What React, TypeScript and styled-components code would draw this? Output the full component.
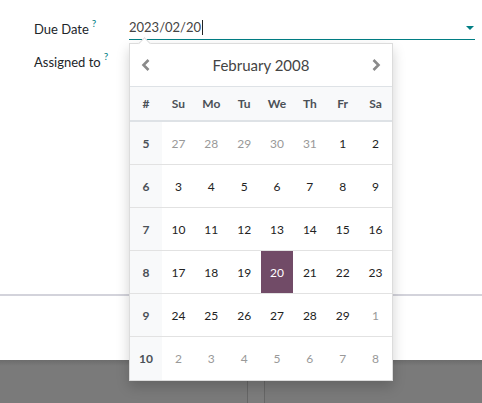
import { createGlobalStyle } from 'styled-components'
import styled from 'styled-components'

const GlobalStyle = createGlobalStyle`
  html, body {
    margin: 0;
    padding: 0;
    background: #fff;
    font-family: Lato, 'Open Sans', sans-serif;
    color: #212529;
  }
`

const Page = styled.div`
  position: relative;
  width: 482px;
  height: 403px;
  display: flex;
  flex-direction: column;
  overflow: hidden;
`

const FormArea = styled.div`
  height: 294px;
  padding: 13px 7px 0 34px;
  box-sizing: border-box;
  display: flex;
  flex-direction: column;
`

const FieldRow = styled.div`
  display: flex;
  align-items: flex-end;
  height: 33px;
`

const Label = styled.div`
  width: 95px;
  font-size: 13px;
  color: #212529;
  padding-bottom: 5px;
  align-self: flex-start;
  padding-top: 8px;
`

const Help = styled.sup`
  color: #017e84;
  font-size: 10px;
  margin-left: 3px;
  vertical-align: 7px;
  line-height: 0;
`

const DateInput = styled.div`
  flex: 1;
  height: 27px;
  margin-bottom: 6px;
  border-bottom: 1px solid #017e84;
  display: flex;
  align-items: center;
  justify-content: space-between;
  font-size: 13px;
  color: #444;
  padding-top: 2px;
  box-sizing: border-box;
`

const Cursor = styled.span`
  display: inline-block;
  width: 1px;
  height: 15px;
  background: #222;
  margin-left: 1px;
  vertical-align: -3px;
`

const Caret = styled.span`
  width: 0;
  height: 0;
  border-left: 4px solid transparent;
  border-right: 4px solid transparent;
  border-top: 4px solid #017e84;
  margin-right: 1px;
  margin-top: 2px;
`

const Footer = styled.div`
  height: 64px;
  border-top: 2px solid #d3d3db;
  background: #fff;
`

const Backdrop = styled.div`
  flex: 1;
  background: linear-gradient(#6c6c6c, #7a7a7a 6px);
  display: flex;
`

const GhostColumn = styled.div`
  margin-left: 247px;
  width: 16px;
  border-left: 1px solid #666;
  border-right: 1px solid #666;
  background: #7c7c7c;
`

const Picker = styled.div`
  position: absolute;
  left: 129px;
  top: 43px;
  width: 264px;
  background: #fff;
  border: 1px solid #dcdcdc;
  box-sizing: border-box;
  box-shadow: 0 6px 12px rgba(0, 0, 0, 0.18);
  font-size: 12px;

  &::before {
    content: '';
    position: absolute;
    left: 10px;
    top: -5px;
    width: 8px;
    height: 8px;
    background: #fff;
    border-top: 1px solid #dcdcdc;
    border-left: 1px solid #dcdcdc;
    transform: rotate(45deg);
  }
`

const MonthBar = styled.div`
  height: 42px;
  display: flex;
  align-items: center;
  justify-content: space-between;
  padding: 0 11px 0 11px;
  border-bottom: 1px solid #dee2e6;
  color: #444;
  font-size: 15px;
`

const Nav = styled.svg`
  width: 10px;
  height: 14px;
  fill: none;
  stroke: #8a8a8a;
  stroke-width: 2.6;
`

const Grid = styled.div`
  display: grid;
  grid-template-columns: 32px repeat(7, 1fr);
`

const HeadCell = styled.div`
  height: 33px;
  display: flex;
  align-items: center;
  justify-content: center;
  background: #f8f9fa;
  border-bottom: 2px solid #dee2e6;
  font-weight: 700;
  color: #4b5157;
`

const WeekCell = styled.div<{ $last?: boolean }>`
  height: 43px;
  display: flex;
  align-items: center;
  justify-content: center;
  background: #f8f9fa;
  font-weight: 700;
  color: #4b5157;
  border-bottom: ${(p) => (p.$last ? 'none' : '1px solid #e2e2e2')};
  box-sizing: border-box;
`

const DayCell = styled.div<{ $muted?: boolean; $active?: boolean; $last?: boolean }>`
  height: 43px;
  display: flex;
  align-items: center;
  justify-content: center;
  box-sizing: border-box;
  border-bottom: ${(p) => (p.$last ? 'none' : '1px solid #e2e2e2')};
  color: ${(p) => (p.$active ? '#fff' : p.$muted ? '#999' : '#222')};
  background: ${(p) => (p.$active ? '#714b67' : '#fff')};
`

const weekdays = ['Su', 'Mo', 'Tu', 'We', 'Th', 'Fr', 'Sa']

const weeks: { no: number; days: { d: number; muted?: boolean }[] }[] = [
  { no: 5, days: [27, 28, 29, 30, 31].map((d) => ({ d, muted: true })).concat([{ d: 1 }, { d: 2 }]) },
  { no: 6, days: [3, 4, 5, 6, 7, 8, 9].map((d) => ({ d })) },
  { no: 7, days: [10, 11, 12, 13, 14, 15, 16].map((d) => ({ d })) },
  { no: 8, days: [17, 18, 19, 20, 21, 22, 23].map((d) => ({ d })) },
  { no: 9, days: [24, 25, 26, 27, 28, 29].map((d) => ({ d })).concat([{ d: 1, muted: true }]) },
  { no: 10, days: [2, 3, 4, 5, 6, 7, 8].map((d) => ({ d, muted: true })) },
]

export default function App() {
  return (
    <>
      <GlobalStyle />
      <Page>
        <FormArea>
          <FieldRow>
            <Label>
              Due Date<Help>?</Help>
            </Label>
            <DateInput>
              <span>
                2023/02/20
                <Cursor />
              </span>
              <Caret />
            </DateInput>
          </FieldRow>
          <FieldRow>
            <Label>
              Assigned to<Help>?</Help>
            </Label>
          </FieldRow>
        </FormArea>
        <Footer />
        <Backdrop>
          <GhostColumn />
        </Backdrop>

        <Picker>
          <MonthBar>
            <Nav viewBox="0 0 10 14">
              <path d="M7.5 2 L2.5 7 L7.5 12" />
            </Nav>
            <span>February 2008</span>
            <Nav viewBox="0 0 10 14">
              <path d="M2.5 2 L7.5 7 L2.5 12" />
            </Nav>
          </MonthBar>
          <Grid>
            <HeadCell>#</HeadCell>
            {weekdays.map((w) => (
              <HeadCell key={w}>{w}</HeadCell>
            ))}
            {weeks.map((wk, i) => {
              const last = i === weeks.length - 1
              return [
                <WeekCell key={`w${wk.no}`} $last={last}>
                  {wk.no}
                </WeekCell>,
                ...wk.days.map((day, j) => (
                  <DayCell
                    key={`${wk.no}-${j}`}
                    $muted={day.muted}
                    $active={wk.no === 8 && day.d === 20}
                    $last={last}
                  >
                    {day.d}
                  </DayCell>
                )),
              ]
            })}
          </Grid>
        </Picker>
      </Page>
    </>
  )
}
